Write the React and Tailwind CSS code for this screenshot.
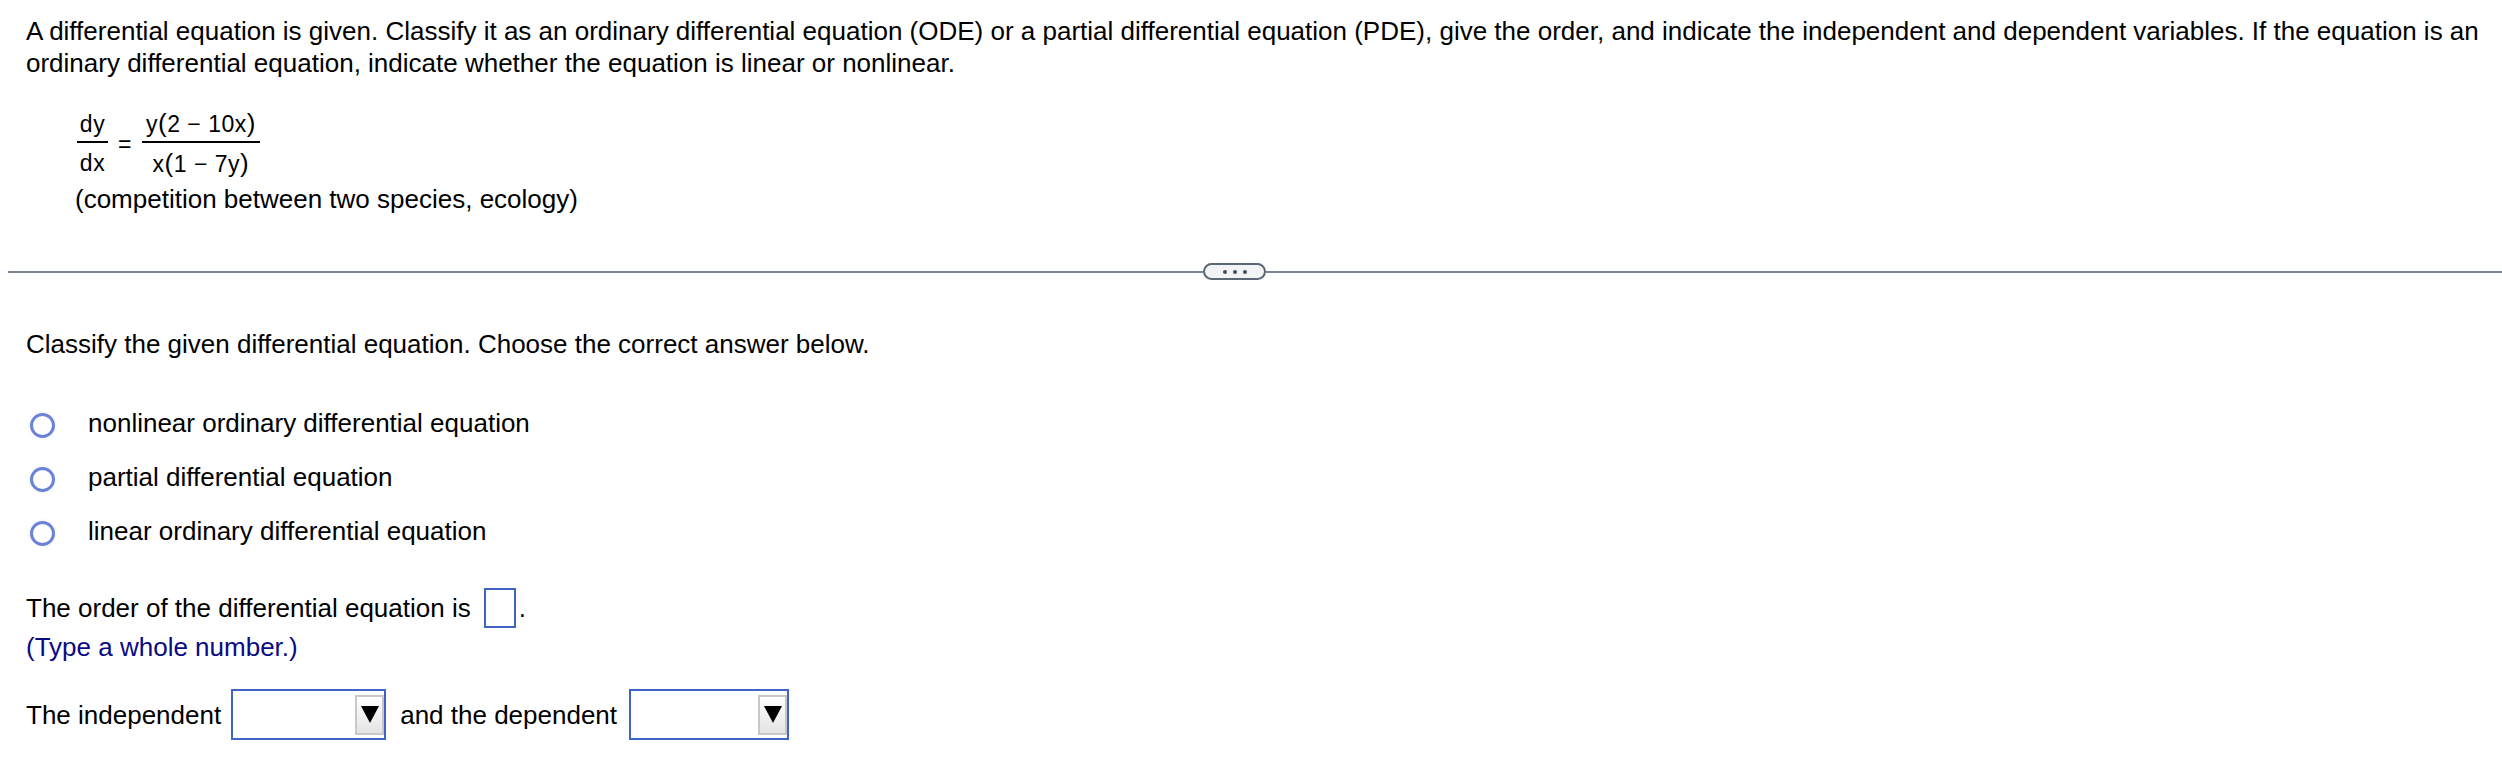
import { useState } from "react";

const options = [
    "nonlinear ordinary differential equation",
    "partial differential equation",
    "linear ordinary differential equation",
];

const Fraction = ({ num, den, className }) => (
    <div className={"flex flex-col items-center " + className}>
        <div className="leading-[24px] pb-[5px] whitespace-nowrap">{num}</div>
        <div className="h-[2px] w-full bg-black" />
        <div className="leading-[24px] pt-[8px] whitespace-nowrap">{den}</div>
    </div>
);

const Paren = ({ children }) => <span className="text-[26px] leading-[24px]">{children}</span>;

const Dropdown = ({ className }) => (
    <div className={"h-[51px] border-2 border-[#3d64c6] bg-white flex items-center justify-end " + className}>
        <div className="w-[29px] h-[40px] border-2 border-[#c8c8c8] bg-linear-to-b from-white to-[#e4e4e4] flex items-center justify-center">
            <svg width="18" height="17" viewBox="0 0 18 17">
                <polygon points="0,0 18,0 9,17" fill="#000" />
            </svg>
        </div>
    </div>
);

const App = () => {
    const [choice, setChoice] = useState(null);
    const [order, setOrder] = useState("");

    return (
        <div className="w-full h-[766px] bg-white text-black text-[26px] leading-[32px] overflow-hidden" style={{ fontFamily: '"Liberation Sans", Arial, sans-serif' }}>
            <div className="pt-[15px] pl-[26px] pr-[10px]">
                <p className="whitespace-nowrap">
                    A differential equation is given. Classify it as an ordinary differential equation (ODE) or a partial differential equation (PDE), give the order, and indicate the independent and dependent variables. If the equation is an
                </p>
                <p>ordinary differential equation, indicate whether the equation is linear or nonlinear.</p>

                <div className="pl-[49px]">
                    <div className="mt-[32px] ml-[2px] flex items-center text-[23px] tracking-[0.5px]">
                        <Fraction num="dy" den="dx" className="w-[31px]" />
                        <span className="mx-[10px] leading-[24px]">=</span>
                        <Fraction
                            className="w-[118px]"
                            num={<>y<Paren>(</Paren>2 − 10x<Paren>)</Paren></>}
                            den={<>x<Paren>(</Paren>1 − 7y<Paren>)</Paren></>}
                        />
                    </div>
                    <p className="mt-[7px]">(competition between two species, ecology)</p>
                </div>
            </div>

            {/* divider with the collapse pill */}
            <div className="mt-[48px] pl-[8px] flex items-center h-[17px]">
                <div className="w-[1195px] h-[2px] bg-[#7a8391]" />
                <button className="w-[63px] h-[17px] rounded-full border-2 border-[#5c6776] bg-[#f2f3f5] flex items-center justify-center gap-[6px]">
                    <span className="w-[4px] h-[4px] rounded-full bg-[#464e5b]" />
                    <span className="w-[4px] h-[4px] rounded-full bg-[#464e5b]" />
                    <span className="w-[4px] h-[4px] rounded-full bg-[#464e5b]" />
                </button>
                <div className="flex-1 h-[2px] bg-[#7a8391]" />
            </div>

            <div className="pl-[26px]">
                <p className="mt-[48px]">Classify the given differential equation. Choose the correct answer below.</p>

                <div className="mt-[47px] flex flex-col gap-[22px] -ml-[26px]">
                    {options.map((opt, i) => (
                        <label key={opt} className="flex items-center h-[32px] cursor-pointer" onClick={() => setChoice(i)}>
                            <span className="ml-[30px] mt-[4px] w-[25px] h-[25px] rounded-full border-[3px] border-[#6a82d8] bg-white shadow-[0_0_4px_rgba(0,0,0,0.08)] flex items-center justify-center">
                                {choice === i && <span className="w-[11px] h-[11px] rounded-full bg-[#3d64c6]" />}
                            </span>
                            <span className="ml-[33px]">{opt}</span>
                        </label>
                    ))}
                </div>

                <div className="mt-[41px] flex items-center h-[40px]">
                    <span>The order of the differential equation is</span>
                    <input
                        value={order}
                        onChange={(e) => setOrder(e.target.value)}
                        className="ml-[13px] w-[32px] h-[40px] border-2 border-[#3d64c6] outline-none text-center"
                    />
                    <span className="ml-[3px]">.</span>
                </div>
                <p className="mt-[3px] text-[#0a0a85]">(Type a whole number.)</p>

                <div className="mt-[26px] flex items-center">
                    <span>The independent</span>
                    <Dropdown className="ml-[10px] w-[155px]" />
                    <span className="ml-[14px]">and the dependent</span>
                    <Dropdown className="ml-[12px] w-[160px]" />
                </div>
            </div>
        </div>
    );
};

export default App;
